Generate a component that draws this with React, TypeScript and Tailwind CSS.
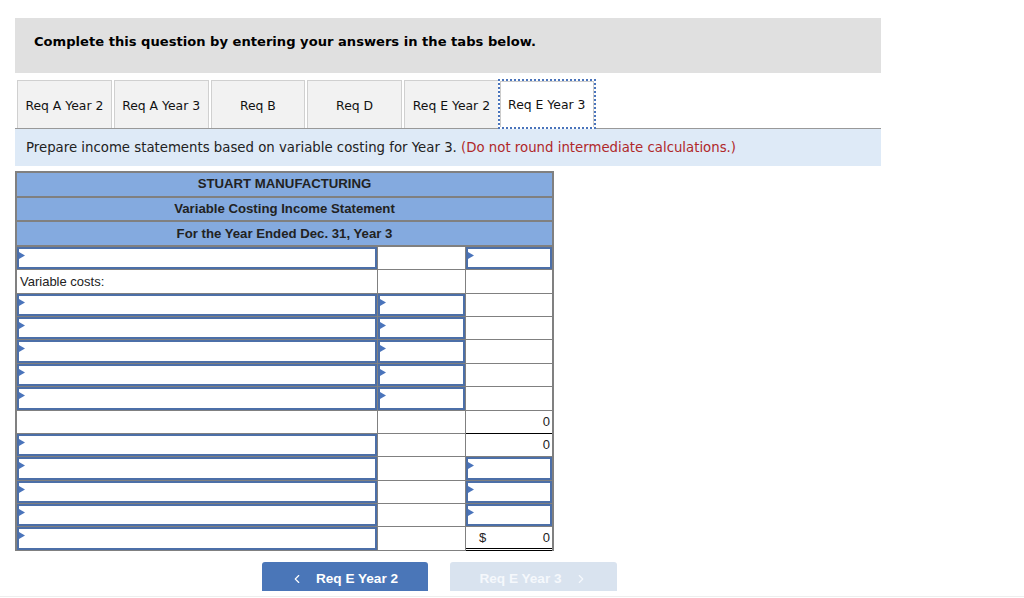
import { ChevronLeft, ChevronRight } from 'lucide-react';

const tabs = ['Req A Year 2', 'Req A Year 3', 'Req B', 'Req D', 'Req E Year 2'];

type Cell = { kind: 'input' | 'empty' | 'text' | 'num' | 'total'; text?: string; rule?: 'single' | 'double' };

const rows: Cell[][] = [
  [{ kind: 'input' }, { kind: 'empty' }, { kind: 'input' }],
  [{ kind: 'text', text: 'Variable costs:' }, { kind: 'empty' }, { kind: 'empty' }],
  [{ kind: 'input' }, { kind: 'input' }, { kind: 'empty' }],
  [{ kind: 'input' }, { kind: 'input' }, { kind: 'empty' }],
  [{ kind: 'input' }, { kind: 'input' }, { kind: 'empty' }],
  [{ kind: 'input' }, { kind: 'input' }, { kind: 'empty' }],
  [{ kind: 'input' }, { kind: 'input' }, { kind: 'empty' }],
  [{ kind: 'empty' }, { kind: 'empty' }, { kind: 'num', text: '0', rule: 'single' }],
  [{ kind: 'input' }, { kind: 'empty' }, { kind: 'num', text: '0' }],
  [{ kind: 'input' }, { kind: 'empty' }, { kind: 'input' }],
  [{ kind: 'input' }, { kind: 'empty' }, { kind: 'input' }],
  [{ kind: 'input' }, { kind: 'empty' }, { kind: 'input' }],
  [{ kind: 'input' }, { kind: 'empty' }, { kind: 'total', text: '0', rule: 'double' }],
];

function InputBox() {
  return (
    <div className="relative h-full w-full border-2 border-[#4c6fa8] bg-white">
      <svg className="absolute left-0 top-[3px]" width="6" height="7" viewBox="0 0 6 7">
        <path d="M0 0 L6 3.5 L0 7 Z" fill="#4a74bb" />
      </svg>
    </div>
  );
}

function TableCell({ cell, last }: { cell: Cell; last: boolean }) {
  const edge = last ? '' : 'border-r border-[#808080]';
  const rule =
    cell.rule === 'single'
      ? 'border-b border-b-black'
      : cell.rule === 'double'
        ? 'border-b-[3px] border-double border-b-black'
        : 'border-b border-[#808080]';
  if (cell.kind === 'input') {
    return (
      <div className={`h-full ${edge} border-b border-[#808080]`}>
        <InputBox />
      </div>
    );
  }
  if (cell.kind === 'text') {
    return (
      <div className={`h-full ${edge} ${rule} flex items-center px-[3px] text-[13px] text-[#222]`}>
        {cell.text}
      </div>
    );
  }
  if (cell.kind === 'num') {
    return (
      <div className={`h-full ${edge} ${rule} flex items-center justify-end pr-[2px] text-[13px] text-[#222]`}>
        {cell.text}
      </div>
    );
  }
  if (cell.kind === 'total') {
    return (
      <div className={`h-full ${edge} ${rule} flex items-center justify-between pl-[13px] pr-[2px] text-[13px] text-[#222]`}>
        <span>$</span>
        <span>{cell.text}</span>
      </div>
    );
  }
  return <div className={`h-full ${edge} ${rule}`} />;
}

export default function App() {
  return (
    <div className="min-h-[598px] bg-white font-['DejaVu_Sans',sans-serif] text-black">
      <div className="ml-[15px] w-[866px] pt-[18px]">
        {/* Instructions header */}
        <div className="h-[55px] bg-[#e0e0e0] pl-[19px] pt-[15px] text-[13.1px] font-bold leading-[18px]">
          Complete this question by entering your answers in the tabs below.
        </div>

        {/* Tabs */}
        <div className="mt-[7px] flex h-[49px] items-end gap-[2px] border-b border-[#999] pl-[2px]">
          {tabs.map((t) => (
            <div
              key={t}
              className="flex h-[48px] w-[94.75px] items-center justify-center border border-b-0 border-[#d0d0d0] bg-[#f2f2f2] pt-[3px] text-[12.4px] text-[#111]"
            >
              {t}
            </div>
          ))}
          <div className="relative -mb-[1px] -ml-[3px] flex h-[50px] w-[98px] items-center justify-center bg-white pt-[3px] text-[12.4px] text-[#111] outline-dotted outline-2 -outline-offset-2 outline-[#4a74bb]">
            <div className="absolute inset-x-[2px] top-[2px] bottom-[2px] border border-[#ccc] border-b-0" />
            <span className="relative">Req E Year 3</span>
          </div>
        </div>

        {/* Instruction bar */}
        <div className="flex h-[37px] items-center bg-[#deeaf7] pl-[11px] pt-[1px] text-[13.3px] text-[#222]">
          <span>
            Prepare income statements based on variable costing for Year 3.{' '}
            <span className="text-[#b0282a]">(Do not round intermediate calculations.)</span>
          </span>
        </div>

        {/* Statement table */}
        <div className="mt-[5px] w-[539px] border-l-2 border-t-2 border-[#808080] font-['Liberation_Sans',Arial,sans-serif]">
          {['STUART MANUFACTURING', 'Variable Costing Income Statement', 'For the Year Ended Dec. 31, Year 3'].map((h) => (
            <div
              key={h}
              className="flex h-[24.6px] items-center justify-center border-b-2 border-r-2 border-[#808080] bg-[#84aadf] text-[13.2px] font-bold text-[#222]"
            >
              {h}
            </div>
          ))}
          <div className="border-r-2 border-[#808080]">
            {rows.map((r, i) => (
              <div key={i} className="grid h-[23.4px] grid-cols-[361px_88px_1fr]">
                {r.map((c, j) => (
                  <TableCell key={j} cell={c} last={j === 2} />
                ))}
              </div>
            ))}
          </div>
        </div>

        {/* Navigation buttons */}
        <div className="mt-[11px] flex gap-[22px] pl-[247px] font-['Liberation_Sans',Arial,sans-serif]">
          <div className="flex h-[29px] w-[166px] items-center justify-center gap-[12px] rounded-t-[3px] bg-[#4a76b8] pr-[2px] pt-[5px] text-[13.6px] font-bold text-white">
            <ChevronLeft size={14} strokeWidth={2} />
            <span>Req E Year 2</span>
          </div>
          <div className="flex h-[29px] w-[167px] items-center justify-center gap-[12px] rounded-t-[3px] bg-[#d9e3ef] pt-[5px] text-[13.6px] font-bold text-[#f5f8fc]">
            <span>Req E Year 3</span>
            <ChevronRight size={14} strokeWidth={2} />
          </div>
        </div>
      </div>
      <div className="mt-[5px] border-t border-[#eeeeee]" />
    </div>
  );
}
